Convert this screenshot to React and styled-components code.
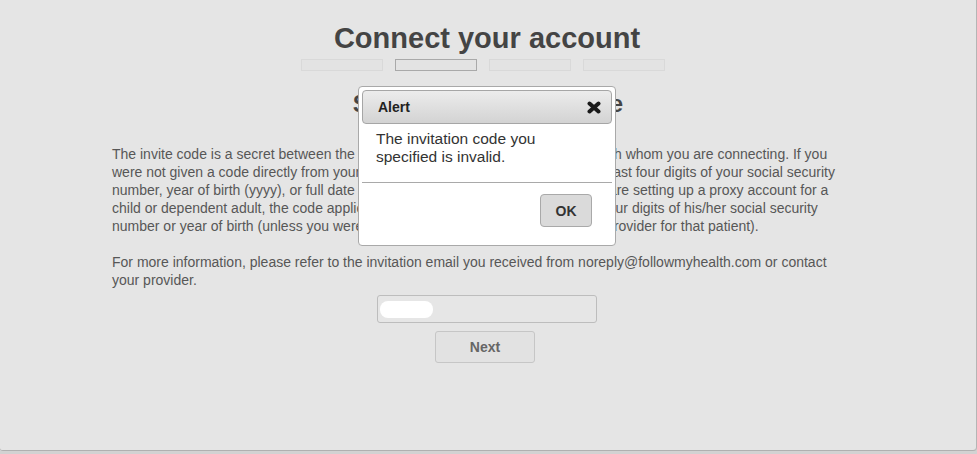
import React from "react";
import styled, { createGlobalStyle } from "styled-components";

const GlobalStyle = createGlobalStyle`
  html, body { margin: 0; padding: 0; }
  body {
    background: #d2d2d2;
    font-family: "Liberation Sans", Arial, sans-serif;
  }
`;

const Panel = styled.div`
  position: relative;
  box-sizing: border-box;
  width: 977px;
  height: 451px;
  background: #e5e5e5;
  border-right: 1px solid #b5b5b5;
  border-bottom: 1px solid #b0b0b0;
  border-bottom-right-radius: 4px;
  border-bottom-left-radius: 3px;
  display: flex;
  flex-direction: column;
  align-items: center;
  padding-top: 20px;
`;

const Title = styled.h1`
  margin: 0 2px 0 0;
  font-size: 29px;
  line-height: 36px;
  font-weight: bold;
  color: #444;
`;

const Steps = styled.div`
  display: flex;
  gap: 12px;
  margin: 3px 10px 0 0;
`;

const Step = styled.div`
  box-sizing: border-box;
  width: 82px;
  height: 12px;
  background: #e3e3e3;
  border: 1px solid ${(p) => (p.$active ? "#a9a9a9" : "#d9d9d9")};
`;

const Subtitle = styled.h2`
  margin: 18px 0 0;
  font-size: 23.5px;
  line-height: 30px;
  font-weight: bold;
  color: #444;
`;

const Copy = styled.div`
  align-self: flex-start;
  margin: 26px 0 0 112px;
  font-size: 14px;
  line-height: 18px;
  color: #575757;
`;

const Para = styled.p`
  margin: 0 0 18px;
`;

const Line = styled.span`
  display: block;
  white-space: nowrap;
`;

const Field = styled.div`
  box-sizing: border-box;
  width: 220px;
  height: 28px;
  margin: -12px 2px 0 0;
  border: 1px solid #bdbdbd;
  border-radius: 3px;
  background: #e6e6e6;
  display: flex;
  align-items: center;
  padding-left: 2px;
`;

const Blot = styled.span`
  display: block;
  width: 53px;
  height: 17px;
  border-radius: 8px;
  background: #ffffff;
`;

const NextButton = styled.button`
  box-sizing: border-box;
  width: 100px;
  height: 32px;
  margin: 8px 6px 0 0;
  border: 1px solid #c6c6c6;
  border-radius: 3px;
  background: #e2e2e2;
  color: #666;
  font-family: inherit;
  font-size: 14px;
  font-weight: bold;
  cursor: pointer;
`;

const Dialog = styled.div`
  position: absolute;
  left: 358px;
  top: 86px;
  box-sizing: border-box;
  width: 258px;
  height: 160px;
  background: #ffffff;
  border: 1px solid #a9a9a9;
  border-radius: 4px;
  padding: 3px;
  display: flex;
  flex-direction: column;
`;

const TitleBar = styled.div`
  box-sizing: border-box;
  height: 34px;
  border: 1px solid #a6a6a6;
  border-radius: 4px;
  background: linear-gradient(#ececec, #d3d3d3);
  display: flex;
  align-items: center;
  justify-content: space-between;
  padding: 0 10px 0 15px;
`;

const TitleText = styled.span`
  font-size: 14px;
  font-weight: bold;
  color: #222;
`;

const CloseIcon = styled.svg`
  width: 14px;
  height: 13px;
  display: block;
`;

const Message = styled.div`
  padding: 6px 14px 0 14px;
  height: 52px;
  font-size: 15.5px;
  line-height: 18px;
  color: #333;
  border-bottom: 1px solid #a9a9a9;
`;

const Actions = styled.div`
  flex: 1;
  display: flex;
  justify-content: flex-end;
  align-items: flex-start;
  padding: 11px 20px 0 0;
`;

const OkButton = styled.button`
  box-sizing: border-box;
  width: 52px;
  height: 33px;
  border: 1px solid #a9a9a9;
  border-radius: 4px;
  background: #dadada;
  color: #333;
  font-family: inherit;
  font-size: 14px;
  font-weight: bold;
`;

export default function App() {
  return (
    <>
      <GlobalStyle />
      <Panel>
        <Title>Connect your account</Title>
        <Steps>
          <Step />
          <Step $active />
          <Step />
          <Step />
        </Steps>
        <Subtitle>Specify your invite code</Subtitle>
        <Copy>
          <Para>
            <Line>The invite code is a secret between the users and the healthcare organization with whom you are connecting. If you</Line>
            <Line>were not given a code directly from your organization, your invitation code is the last four digits of your social security</Line>
            <Line>number, year of birth (yyyy), or full date of birth (mmddyyyy). Alternatively, if you are setting up a proxy account for a</Line>
            <Line>child or dependent adult, the code applies to the dependents, and it is their last four digits of his/her social security</Line>
            <Line>number or year of birth (unless you were given an invite code directly from your provider for that patient).</Line>
          </Para>
          <Para>
            <Line>For more information, please refer to the invitation email you received from noreply@followmyhealth.com or contact</Line>
            <Line>your provider.</Line>
          </Para>
        </Copy>
        <Field>
          <Blot />
        </Field>
        <NextButton>Next</NextButton>

        <Dialog role="alertdialog">
          <TitleBar>
            <TitleText>Alert</TitleText>
            <CloseIcon viewBox="0 0 14 13">
              <path d="M2.5 2.5 L11.5 10.5 M11.5 2.5 L2.5 10.5" stroke="#1a1a1a" strokeWidth="4" strokeLinecap="round" />
            </CloseIcon>
          </TitleBar>
          <Message>
            The invitation code you
            <br />
            specified is invalid.
          </Message>
          <Actions>
            <OkButton>OK</OkButton>
          </Actions>
        </Dialog>
      </Panel>
    </>
  );
}
